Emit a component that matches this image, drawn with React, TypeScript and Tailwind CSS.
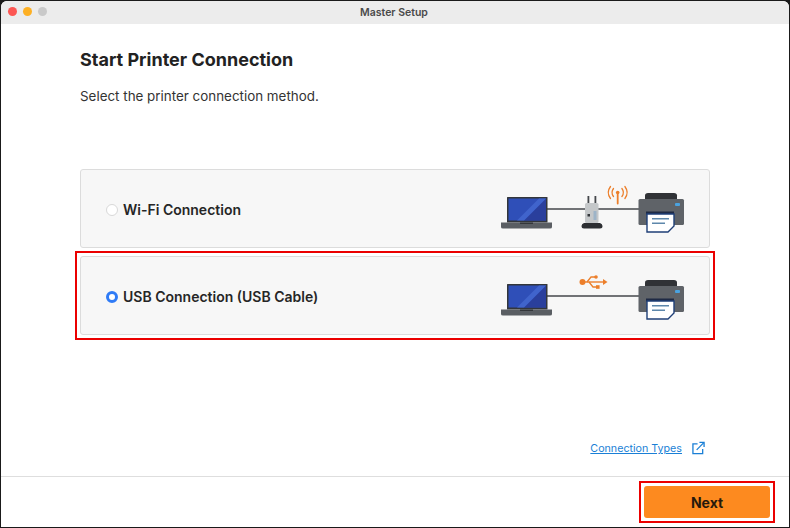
import React from "react";

const Laptop = () => (
  <g>
    <rect x="507" y="197" width="40.5" height="25.5" rx="0.5" fill="#33363b" />
    <rect x="508.5" y="198.5" width="37.5" height="22" fill="#2f4fb8" />
    <path d="M524 220.5 L546 198.5 V220.5 Z" fill="#2a3f9c" />
    <path d="M517 220.5 L539 198.5 H546 L524 220.5 Z" fill="#4064cc" />
    <path d="M501 222.5 H552 V227 Q552 228.5 550 228.5 H503 Q501 228.5 501 227 Z" fill="#5a5e63" />
    <rect x="520" y="222.5" width="13" height="1.5" fill="#33363a" />
  </g>
);

const Printer = () => (
  <g>
    <path d="M645 199 V195.5 Q645 193 648 193 H674 Q677 193 677 195.5 V199 Z" fill="#303236" />
    <rect x="638.5" y="199" width="45.5" height="26" rx="1.5" fill="#5f6368" />
    <rect x="675" y="203" width="5" height="3" rx="1" fill="#4aa3e0" />
    <rect x="646" y="211.5" width="28" height="3" fill="#1f2a44" />
    <path d="M647 214 H674 V226 L668 232 H647 Z" fill="#fff" stroke="#1f3f77" strokeWidth="1.4" />
    <rect x="652" y="218" width="17" height="1.5" fill="#5d87ab" />
    <rect x="652" y="222.5" width="13" height="1.5" fill="#5d87ab" />
  </g>
);

const Router = () => (
  <g>
    <rect x="587.5" y="196" width="1.8" height="9" fill="#44474b" />
    <rect x="594.5" y="196" width="1.8" height="9" fill="#44474b" />
    <rect x="585" y="203" width="13.5" height="20" rx="1.5" fill="#c4c7c9" />
    <rect x="587.5" y="214" width="2.5" height="2.5" fill="#33363a" />
    <rect x="593.5" y="211" width="3" height="9" fill="#9db4c8" />
    <path d="M584 223 H600 Q602.5 224 602.5 226 Q602.5 228.5 600 228.5 H584 Q581.5 228.5 581.5 226 Q581.5 224 584 223 Z" fill="#2d2f33" />
  </g>
);

const WifiSignal = () => (
  <g fill="none" stroke="#ec7f2b" strokeWidth="1.3" strokeLinecap="round">
    <path d="M617.7 193 V203.5" strokeWidth="1.8" />
    <circle cx="617.7" cy="192.5" r="1.8" fill="#ec7f2b" stroke="none" />
    <path d="M613.5 188.5 Q610.5 192.5 613.5 196.5" />
    <path d="M621.9 188.5 Q624.9 192.5 621.9 196.5" />
    <path d="M610.5 186.5 Q606 192.5 610.5 198.5" />
    <path d="M624.9 186.5 Q629.4 192.5 624.9 198.5" />
  </g>
);

const UsbSign = () => (
  <g fill="#ec7f2b" stroke="#ec7f2b">
    <circle cx="582.5" cy="195" r="3" stroke="none" />
    <path d="M583 195 H604" strokeWidth="1.4" fill="none" />
    <path d="M603 192 L607.5 195 L603 198 Z" stroke="none" />
    <path d="M587 195 L591 190 H595" strokeWidth="1.3" fill="none" />
    <circle cx="596" cy="190" r="1.8" stroke="none" />
    <path d="M589 195 L593 200 H597" strokeWidth="1.3" fill="none" />
    <rect x="596" y="198.2" width="3.6" height="3.6" stroke="none" />
  </g>
);

const Diagram = ({ wifi }: { wifi: boolean }) => (
  <svg width="186" height="50" viewBox="500 185 186 50" className="shrink-0">
    <path d="M547 209 H640" stroke="#44474b" strokeWidth="1.5" fill="none" />
    <Laptop />
    {wifi ? (
      <>
        <Router />
        <WifiSignal />
      </>
    ) : (
      <UsbSign />
    )}
    <Printer />
  </svg>
);

const OptionCard = ({
  label,
  selected,
  wifi,
}: {
  label: string;
  selected: boolean;
  wifi: boolean;
}) => (
  <div className="flex h-[79px] items-center justify-between rounded-[3px] border border-[#dcdcdc] bg-[#f7f7f7] pl-[25px] pr-[23px] pt-[2px]">
    <div className="flex items-center gap-[5px]">
      {selected ? (
        <span className="h-[12px] w-[12px] rounded-full border-[3.5px] border-[#2f7bf6] bg-white" />
      ) : (
        <span className="h-[12px] w-[12px] rounded-full border border-[#d8d8d8] bg-white" />
      )}
      <span className="text-[14px] font-semibold text-[#262626]">{label}</span>
    </div>
    <Diagram wifi={wifi} />
  </div>
);

export default function App() {
  return (
    <div className="h-[528px] w-[790px] bg-[#1a1a1a] p-px font-['Inter',sans-serif]">
      <div className="flex h-full flex-col overflow-hidden rounded-t-[6px] bg-white">
        <div className="relative flex h-[23px] shrink-0 items-center justify-center bg-[#ececec]">
          <div className="absolute left-[7px] top-[6px] flex gap-[6px]">
            <span className="h-[9px] w-[9px] rounded-full bg-[#fc5753]" />
            <span className="h-[9px] w-[9px] rounded-full bg-[#fdb024]" />
            <span className="h-[9px] w-[9px] rounded-full bg-[#c9c9c9]" />
          </div>
          <span className="-ml-[2px] text-[10.5px] font-semibold text-[#4a4a4a]">Master Setup</span>
        </div>

        <div className="flex flex-1 flex-col px-[74px]">
          <h1 className="mt-[24px] pl-[5px] text-[18px] font-bold leading-[24px] text-[#222]">
            Start Printer Connection
          </h1>
          <p className="mt-[15px] pl-[5px] text-[13.4px] leading-[18px] text-[#333]">
            Select the printer connection method.
          </p>

          <div className="mt-[64px] px-[5px]">
            <OptionCard label="Wi-Fi Connection" selected={false} wifi />
          </div>
          <div className="mt-[3px] border-2 border-[#eb0000] p-[3px]">
            <OptionCard label="USB Connection (USB Cable)" selected wifi={false} />
          </div>

          <div className="mt-auto mb-[20px] flex items-center justify-end gap-[10px] pr-[10px]">
            <a className="pt-[2px] text-[10.7px] leading-[14px] text-[#1a7fd6] underline">Connection Types</a>
            <svg width="13" height="14" viewBox="0 0 14 14" fill="none" stroke="#1a7fd6" strokeWidth="1.4">
              <path d="M6 2.5 H1 V13 H11.5 V8" />
              <path d="M5 9 L12.5 1.5" />
              <path d="M8 1 H13 V6" />
            </svg>
          </div>
        </div>

        <div className="flex h-[51px] shrink-0 items-center justify-end border-t border-[#dedede] pr-[14px]">
          <div className="border-2 border-[#eb0000] p-[3px]">
            <button className="flex h-[32px] w-[126px] items-center justify-center rounded-[3px] bg-[#fd8a1f] text-[14px] font-bold text-[#26190c]">
              Next
            </button>
          </div>
        </div>
      </div>
    </div>
  );
}
